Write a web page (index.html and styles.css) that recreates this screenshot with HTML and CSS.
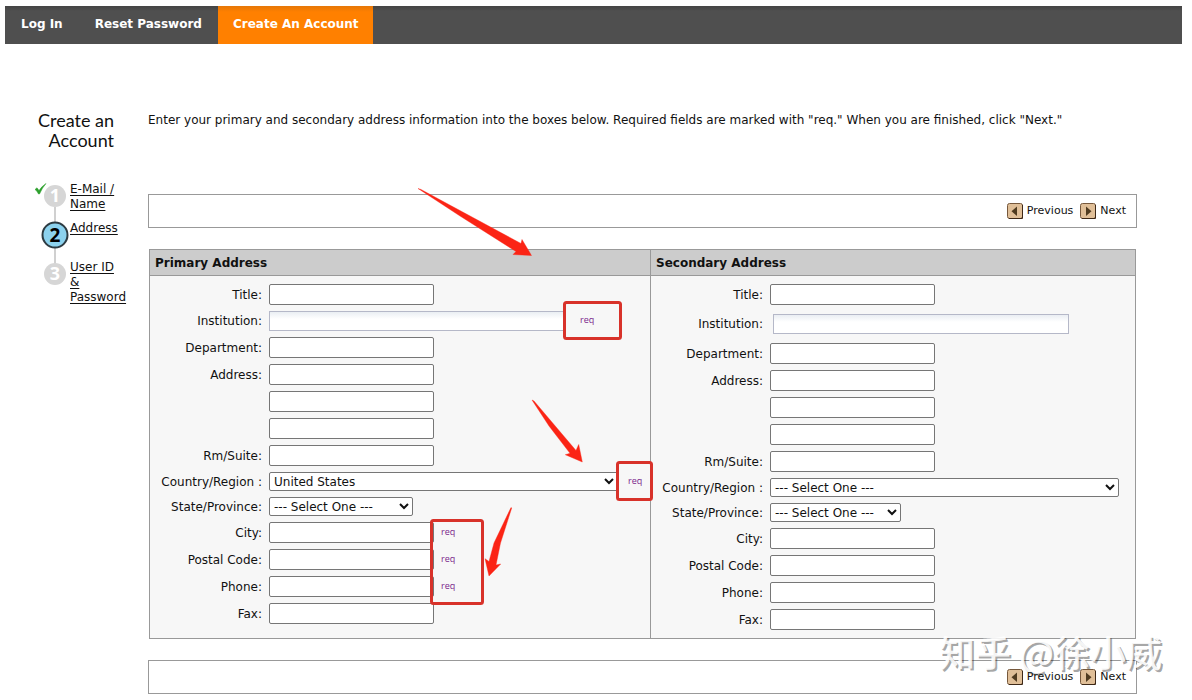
FILE: index.html
```html
<!DOCTYPE html>
<html lang="en">
<head>
<meta charset="utf-8">
<title>Create an Account</title>
<link rel="stylesheet" href="styles.css">
</head>
<body>
<nav class="topnav">
  <a href="#login">Log In</a>
  <a href="#reset">Reset Password</a>
  <a href="#create" class="active" aria-current="page">Create An Account</a>
</nav>

<div class="layout">
  <aside class="sidebar">
    <h1 class="side-title">Create an<br>Account</h1>
    <ol class="steps">
      <li>
        <svg class="step-icon" width="34" height="39" viewBox="0 0 34 39" aria-hidden="true">
          <path d="M20 26V39" stroke="#d0d0d0" stroke-width="2"/>
          <circle cx="20" cy="15" r="11" fill="#d6d6d6"/>
          <text class="num num-off" x="20" y="21">1</text>
          <path d="M0 8.500L2 6.800L4 9.500Q7 5 11 2.500Q7 7 4.500 13H3.500Q2 9.500 0 8.500Z" fill="#2da02d" stroke="#2da02d" stroke-width=".5"/>
        </svg>
        <a href="#email">E-Mail /<br>Name</a>
      </li>
      <li>
        <svg class="step-icon" width="34" height="39" viewBox="0 0 34 39" aria-hidden="true">
          <path d="M20 0V39" stroke="#d0d0d0" stroke-width="2"/>
          <circle cx="20" cy="15" r="12.500" fill="#8cd2ee" stroke="#2d3b42" stroke-width="2"/>
          <text class="num" x="20" y="22">2</text>
        </svg>
        <a href="#address">Address</a>
      </li>
      <li>
        <svg class="step-icon" width="34" height="39" viewBox="0 0 34 39" aria-hidden="true">
          <path d="M20 0V5" stroke="#d0d0d0" stroke-width="2"/>
          <circle cx="20" cy="15" r="11" fill="#d6d6d6"/>
          <text class="num num-off" x="20" y="21">3</text>
        </svg>
        <a href="#user">User ID<br>&amp;<br>Password</a>
      </li>
    </ol>
  </aside>

  <main class="main">
    <p class="intro">Enter your primary and secondary address information into the boxes below. Required fields are marked with "req." When you are finished, click "Next."</p>

    <div class="pager">
      <button type="button"><svg width="16" height="16" viewBox="0 0 16 16" aria-hidden="true"><rect x=".5" y=".5" width="15" height="15" rx="2" fill="#e0bf98" stroke="#76583c"/><path d="M2 15.500H15.500V2" fill="none" stroke="#3d2817"/><path d="M10 3.500V13L4.500 8.300Z" fill="#4f3b20"/></svg>Previous</button>
      <button type="button"><svg width="16" height="16" viewBox="0 0 16 16" aria-hidden="true"><rect x=".5" y=".5" width="15" height="15" rx="2" fill="#e0bf98" stroke="#76583c"/><path d="M2 15.500H15.500V2" fill="none" stroke="#3d2817"/><path d="M6 3.500V13L11.500 8.300Z" fill="#4f3b20"/></svg>Next</button>
    </div>

    <form class="panel">
      <section class="address">
        <h2>Primary Address</h2>
        <div class="fields">
          <div class="row"><label for="p-title">Title:</label><input id="p-title" type="text"></div>
          <div class="row"><label for="p-inst">Institution:</label><input id="p-inst" class="inst" type="text"><span class="req req-inst">req</span></div>
          <div class="row"><label for="p-dept">Department:</label><input id="p-dept" type="text"></div>
          <div class="row"><label for="p-addr">Address:</label><input id="p-addr" type="text"></div>
          <div class="row"><span></span><input type="text" aria-label="Address line 2"></div>
          <div class="row"><span></span><input type="text" aria-label="Address line 3"></div>
          <div class="row"><label for="p-rm">Rm/Suite:</label><input id="p-rm" type="text"></div>
          <div class="row"><label for="p-country">Country/Region :</label><select id="p-country" class="country"><option>United States</option></select><span class="req req-country">req</span></div>
          <div class="row"><label for="p-state">State/Province:</label><select id="p-state" class="state-wide"><option>--- Select One ---</option></select></div>
          <div class="row"><label for="p-city">City:</label><input id="p-city" type="text"><span class="req">req</span></div>
          <div class="row"><label for="p-zip">Postal Code:</label><input id="p-zip" type="text"><span class="req">req</span></div>
          <div class="row"><label for="p-phone">Phone:</label><input id="p-phone" type="text"><span class="req">req</span></div>
          <div class="row"><label for="p-fax">Fax:</label><input id="p-fax" type="text"></div>
        </div>
      </section>
      <section class="address">
        <h2>Secondary Address</h2>
        <div class="fields">
          <div class="row"><label for="s-title">Title:</label><input id="s-title" type="text"></div>
          <div class="row"><label for="s-inst">Institution:</label><input id="s-inst" class="inst inst-spaced" type="text"></div>
          <div class="row"><label for="s-dept">Department:</label><input id="s-dept" type="text"></div>
          <div class="row"><label for="s-addr">Address:</label><input id="s-addr" type="text"></div>
          <div class="row"><span></span><input type="text" aria-label="Secondary address line 2"></div>
          <div class="row"><span></span><input type="text" aria-label="Secondary address line 3"></div>
          <div class="row"><label for="s-rm">Rm/Suite:</label><input id="s-rm" type="text"></div>
          <div class="row"><label for="s-country">Country/Region :</label><select id="s-country" class="country"><option>--- Select One ---</option></select></div>
          <div class="row"><label for="s-state">State/Province:</label><select id="s-state" class="state"><option>--- Select One ---</option></select></div>
          <div class="row"><label for="s-city">City:</label><input id="s-city" type="text"></div>
          <div class="row"><label for="s-zip">Postal Code:</label><input id="s-zip" type="text"></div>
          <div class="row"><label for="s-phone">Phone:</label><input id="s-phone" type="text"></div>
          <div class="row"><label for="s-fax">Fax:</label><input id="s-fax" type="text"></div>
        </div>
      </section>
    </form>

    <div class="pager">
      <button type="button"><svg width="16" height="16" viewBox="0 0 16 16" aria-hidden="true"><rect x=".5" y=".5" width="15" height="15" rx="2" fill="#e0bf98" stroke="#76583c"/><path d="M2 15.500H15.500V2" fill="none" stroke="#3d2817"/><path d="M10 3.500V13L4.500 8.300Z" fill="#4f3b20"/></svg>Previous</button>
      <button type="button"><svg width="16" height="16" viewBox="0 0 16 16" aria-hidden="true"><rect x=".5" y=".5" width="15" height="15" rx="2" fill="#e0bf98" stroke="#76583c"/><path d="M2 15.500H15.500V2" fill="none" stroke="#3d2817"/><path d="M6 3.500V13L11.500 8.300Z" fill="#4f3b20"/></svg>Next</button>
    </div>
  </main>
</div>

<svg class="marks" width="700" height="640" viewBox="0 0 700 640" aria-hidden="true">
  <g fill="none" stroke="#d8322a" stroke-width="3">
    <rect x="564.500" y="302.500" width="56" height="36" rx="2"/>
    <rect x="617.500" y="462.500" width="34" height="37" rx="2"/>
    <rect x="431.500" y="520.500" width="51" height="83" rx="2"/>
  </g>
  <g fill="#fb2415" stroke="#fb2415" stroke-width=".4">
    <path d="M418 188.500L421 189.500L521 243.500L522 239.500L531.500 255.500L513 254.500L516 251.500L460 216Z"/>
    <path d="M532 400L534 401L576 450.500L578.700 444.500L582.300 462L565.300 454.700L570 453.300L549 426Z"/>
    <path d="M511 507.500L511.700 508L500.500 543L496 565L500.700 564L489 576L485 558.700L489 561.500L494 543Z"/>
  </g>
</svg>
<div class="watermark">知乎 @徐小威</div>
</body>
</html>
```
FILE: styles.css
```css
* {
  box-sizing: border-box;
}

body {
  position: relative;
  margin: 0;
  padding: 6px 10px 0 5px;
  background: #fff;
  color: #111;
  font: 12px/15px "DejaVu Sans", sans-serif;
}

.topnav {
  display: flex;
  height: 38px;
  background: linear-gradient(#444, #4f4f4f 5px);
}

.topnav a {
  padding: 11px 16px 0;
  color: #fff;
  font-weight: bold;
  text-decoration: none;
}

.topnav .active {
  padding: 11px 14px 0 15px;
  background: linear-gradient(#e57708, #ff8000 6px);
}

.layout {
  display: flex;
  gap: 20px;
  padding: 66px 45px 0 30px;
}

.sidebar {
  flex: 0 0 93px;
}

.side-title {
  margin: 0 0 31px;
  padding-right: 14px;
  font: 18px/20px Lato, sans-serif;
  text-align: right;
}

.steps {
  margin: 0;
  padding: 0;
  list-style: none;
}

.steps li {
  display: flex;
  gap: 1px;
  height: 39px;
}

.steps a {
  padding-top: 1px;
  color: #111;
  text-underline-offset: 2px;
}

.step-icon {
  flex: none;
}

.num {
  font: bold 19px "Open Sans", sans-serif;
  text-anchor: middle;
}

.num-off {
  font-size: 18px;
  fill: #fff;
}

.main {
  flex: 1;
  min-width: 0;
}

.intro {
  margin: 3px 0 66px;
}

.pager {
  display: flex;
  align-items: center;
  justify-content: flex-end;
  gap: 7px;
  height: 34px;
  padding-right: 10px;
  border: 1px solid #999;
}

.pager button {
  position: relative;
  z-index: 1;
  display: flex;
  align-items: center;
  gap: 4px;
  padding: 0;
  border: 0;
  background: none;
  color: #111;
  font: 11px/16px "DejaVu Sans", sans-serif;
}

.panel {
  display: grid;
  grid-template-columns: 500fr 485fr;
  margin: 21px 1px;
  border: 1px solid #999;
  background: #f7f7f7;
}

.address + .address {
  border-left: 1px solid #999;
}

.address h2 {
  margin: 0;
  padding: 6px 5px 4px;
  border-bottom: 1px solid #999;
  background: #ccc;
  font-size: 12px;
  line-height: 15px;
}

.fields {
  display: flex;
  flex-direction: column;
  gap: 6px;
  padding: 8px 0;
}

.row {
  display: grid;
  grid-template-columns: 112px auto 1fr;
  align-items: center;
  column-gap: 7px;
}

.row label {
  padding-top: 1px;
  text-align: right;
  white-space: nowrap;
}

.row input,
.row select {
  margin: 0;
  border: 1px solid #767676;
  border-radius: 2px;
  background-color: #fff;
  color: #111;
  font: 12px/15px "DejaVu Sans", sans-serif;
}

.row input {
  width: 165px;
  height: 21px;
  padding: 1px 2px;
}

.row .inst {
  width: 296px;
  height: 20px;
  border-color: #b5b8c8;
  border-radius: 0;
  background: linear-gradient(#eaeef3, #fff 7px);
}

.row .inst-spaced {
  margin: 3px;
}

.row select {
  height: 19px;
  padding: 0;
}

.row .country {
  width: 349px;
}

.row .state {
  width: 131px;
}

.row .state-wide {
  width: 144px;
}

.req {
  padding-bottom: 2px;
  color: #7b1f8c;
  font: 9px/12px "Open Sans", sans-serif;
}

.req-inst {
  padding-left: 8px;
}

.req-country {
  padding-left: 3px;
}

.marks {
  position: absolute;
  top: 0;
  left: 0;
  pointer-events: none;
}

.watermark {
  position: absolute;
  right: 30px;
  bottom: 27px;
  color: rgba(255, 255, 255, 0.9);
  font: 500 36px/32px "Noto Sans CJK SC", sans-serif;
  text-shadow: 2px 2px 0 rgba(0, 0, 0, 0.35);
  pointer-events: none;
}
```
